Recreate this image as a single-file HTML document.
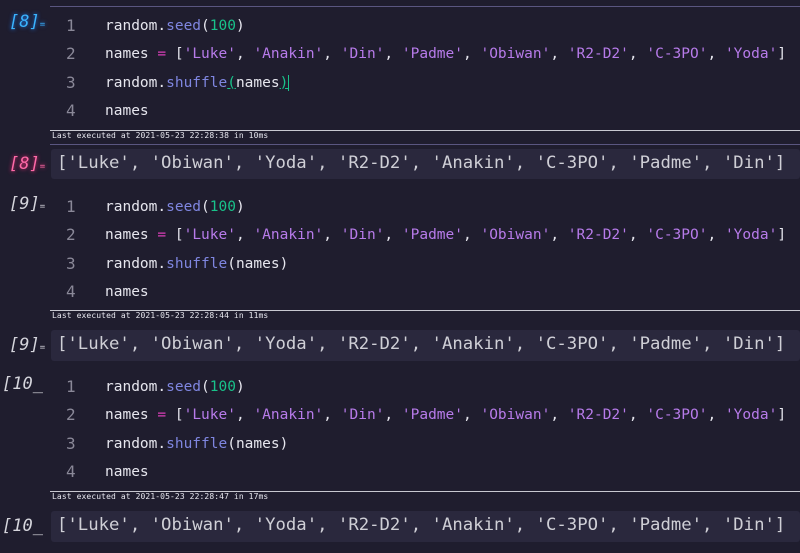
<!DOCTYPE html>
<html><head><meta charset="utf-8"><style>
body{margin:0;width:800px;height:553px;background:#1f1d2e;overflow:hidden;position:relative;font-family:"DejaVu Sans Mono",monospace}
.a{position:absolute;white-space:pre}
.code{font-size:14.5px;color:#e6e6ee;line-height:28.3px;letter-spacing:0px}
.ln{color:#8a8898;font-size:16px;line-height:28.3px}
.f{color:#7f86e0}.n{color:#19c28a}.s{color:#b77bea}.o{color:#d83fb8}
.hl{position:absolute;height:1px}
.ex{font-size:8px;color:#e6e6ee;letter-spacing:0.1px}
.out{position:absolute;left:51px;width:749px;background:#2a283d;border-radius:3px}
.ot{font-size:17.3px;color:#cfcfd6}
.p{font-size:17px;font-style:italic;color:#d5d5dc}
</style></head><body>
<div class="hl" style="left:50px;top:6px;width:750px;background:#5a5680"></div>
<div class="a p" style="left:9px;top:12px;color:#3ab4ff;text-shadow:0 0 4px #1a7fff">[8]<span style="font-size:9px">=</span></div>
<div class="a ln" style="left:66px;top:12px">1
2
3
4</div>
<div class="a code" style="left:105px;top:12px">random.<span class="f">seed</span>(<span class="n">100</span>)
names <span class="o">=</span> [<span class="s">'Luke'</span>, <span class="s">'Anakin'</span>, <span class="s">'Din'</span>, <span class="s">'Padme'</span>, <span class="s">'Obiwan'</span>, <span class="s">'R2-D2'</span>, <span class="s">'C-3PO'</span>, <span class="s">'Yoda'</span>]
random.<span class="f">shuffle</span><span style="color:#19c28a;text-decoration:underline">(</span>names<span style="color:#19c28a;text-decoration:underline">)</span><span style="border-left:1px solid #19c28a"></span>
names</div>
<div class="hl" style="left:50px;top:130px;width:750px;background:#c8c8d0"></div>
<div class="a ex" style="left:52px;top:131px">Last executed at 2021-05-23 22:28:38 in 10ms</div>
<div class="hl" style="left:50px;top:144px;width:750px;background:#5a5680"></div>
<div class="out" style="top:149px;height:30px"></div>
<div class="a p" style="left:9px;top:154px;color:#ff6aa8;text-shadow:0 0 4px #ff2a7a">[8]<span style="font-size:9px">=</span></div>
<div class="a ot" style="left:57px;top:153px">['Luke', 'Obiwan', 'Yoda', 'R2-D2', 'Anakin', 'C-3PO', 'Padme', 'Din']</div>

<div class="a p" style="left:9px;top:194px">[9]<span style="font-size:9px">=</span></div>
<div class="a ln" style="left:66px;top:193px">1
2
3
4</div>
<div class="a code" style="left:105px;top:193px">random.<span class="f">seed</span>(<span class="n">100</span>)
names <span class="o">=</span> [<span class="s">'Luke'</span>, <span class="s">'Anakin'</span>, <span class="s">'Din'</span>, <span class="s">'Padme'</span>, <span class="s">'Obiwan'</span>, <span class="s">'R2-D2'</span>, <span class="s">'C-3PO'</span>, <span class="s">'Yoda'</span>]
random.<span class="f">shuffle</span>(names)
names</div>
<div class="hl" style="left:50px;top:310px;width:750px;background:#c8c8d0"></div>
<div class="a ex" style="left:52px;top:311px">Last executed at 2021-05-23 22:28:44 in 11ms</div>
<div class="out" style="top:330px;height:31px"></div>
<div class="a p" style="left:9px;top:335px">[9]<span style="font-size:9px">=</span></div>
<div class="a ot" style="left:57px;top:334px">['Luke', 'Obiwan', 'Yoda', 'R2-D2', 'Anakin', 'C-3PO', 'Padme', 'Din']</div>

<div class="a p" style="left:2px;top:374px">[10_</div>
<div class="a ln" style="left:66px;top:373px">1
2
3
4</div>
<div class="a code" style="left:105px;top:373px">random.<span class="f">seed</span>(<span class="n">100</span>)
names <span class="o">=</span> [<span class="s">'Luke'</span>, <span class="s">'Anakin'</span>, <span class="s">'Din'</span>, <span class="s">'Padme'</span>, <span class="s">'Obiwan'</span>, <span class="s">'R2-D2'</span>, <span class="s">'C-3PO'</span>, <span class="s">'Yoda'</span>]
random.<span class="f">shuffle</span>(names)
names</div>
<div class="hl" style="left:50px;top:491px;width:750px;background:#c8c8d0"></div>
<div class="a ex" style="left:52px;top:492px">Last executed at 2021-05-23 22:28:47 in 17ms</div>
<div class="out" style="top:511px;height:31px"></div>
<div class="a p" style="left:2px;top:516px">[10_</div>
<div class="a ot" style="left:57px;top:515px">['Luke', 'Obiwan', 'Yoda', 'R2-D2', 'Anakin', 'C-3PO', 'Padme', 'Din']</div>
</body></html>
